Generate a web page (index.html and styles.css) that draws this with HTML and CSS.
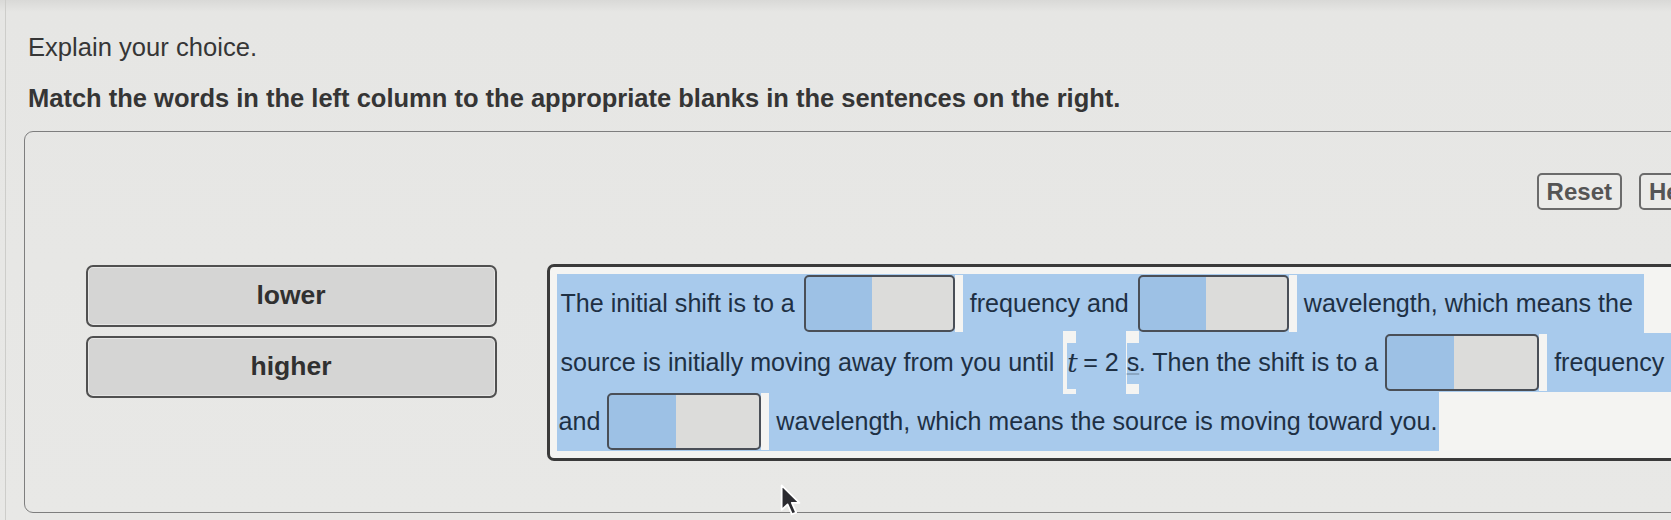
FILE: index.html
```html
<!DOCTYPE html>
<html lang="en">
<head>
<meta charset="utf-8">
<title>Match the words</title>
<link rel="stylesheet" href="styles.css">
</head>
<body>
<div class="page">
  <p class="prompt">Explain your choice.</p>
  <p class="instr">Match the words in the left column to the appropriate blanks in the sentences on the right.</p>
  <div class="panel">
    <div class="toolbar">
      <button class="btn">Reset</button>
      <button class="btn">Help</button>
    </div>
    <div class="work">
      <div class="bank">
        <div class="tile">lower</div>
        <div class="tile">higher</div>
      </div>
      <div class="sentences">
        <div class="line">
          <span class="seg lead pr">The initial shift is to a </span>
          <span class="blank"></span><span class="gap"></span>
          <span class="seg pr"> frequency and </span>
          <span class="blank"></span><span class="gap"></span>
          <span class="seg end1"> wavelength, which means the </span>
        </div>
        <div class="line">
          <span class="seg lead">source is initially moving away from you until </span>
          <span class="mbox tbox"><span class="mi">t</span></span>
          <span class="seg"> = 2 </span>
          <span class="mbox sbox"><span class="mn">s</span></span>
          <span class="seg">. Then the shift is to a </span>
          <span class="blank wide"></span><span class="gap"></span>
          <span class="seg end2"> frequency </span>
        </div>
        <div class="line">
          <span class="seg lead3">and </span>
          <span class="blank wide"></span><span class="gap"></span>
          <span class="seg end3"> wavelength, which means the source is moving toward you.</span>
        </div>
      </div>
    </div>
  </div>
  <svg class="cursor" width="24" height="34" viewBox="0 0 16 23" aria-hidden="true">
    <path d="M1 1 L1 17.5 L5 13.8 L8 20.5 L10.8 19.3 L7.9 12.8 L13 12.8 Z" fill="#2b2b30" stroke="#ffffff" stroke-width="1.2" stroke-linejoin="round"/>
  </svg>
</div>
</body>
</html>
```

FILE: styles.css
```css
html, body {
  margin: 0;
  padding: 0;
}
body {
  width: 1671px;
  height: 520px;
  overflow: hidden;
  background: linear-gradient(#d9d9d7 0, #e6e6e4 12px, #e8e8e6 100%);
  font-family: "Liberation Sans", Arial, Helvetica, sans-serif;
}
.page {
  position: relative;
  margin-left: 5px;
  border-left: 1px solid #cdcdca;
  height: 520px;
  box-sizing: border-box;
  padding-top: 32px;
}
.prompt {
  margin: 0 0 0 22px;
  font-size: 25.6px;
  line-height: 30px;
  color: #363636;
}
.instr {
  margin: 21px 0 0 22px;
  font-size: 25.5px;
  line-height: 30px;
  font-weight: bold;
  color: #353535;
}
.panel {
  margin: 18px 0 0 18px;
  width: 1708px;
  height: 382px;
  box-sizing: border-box;
  border: 1.5px solid #7e7e7e;
  border-radius: 9px;
  padding: 40.5px 20px 0 60.5px;
}
.toolbar {
  display: flex;
  justify-content: flex-end;
  gap: 17px;
}
.btn {
  height: 37px;
  box-sizing: border-box;
  padding: 0 8px;
  border: 2px solid #6b6b6b;
  border-radius: 5px;
  background: #ebebe9;
  font-family: "Liberation Sans", Arial, sans-serif;
  font-weight: bold;
  font-size: 24px;
  line-height: 33px;
  color: #555555;
}
.work {
  display: flex;
  align-items: flex-start;
  gap: 50px;
  margin-top: 54px;
}
.bank {
  flex: none;
  width: 411px;
  display: flex;
  flex-direction: column;
  gap: 9px;
  margin-top: 1px;
}
.tile {
  height: 62px;
  box-sizing: border-box;
  border: 2.5px solid #505050;
  border-radius: 7px;
  background: #d5d5d4;
  box-shadow: inset 0 0 0 1px #e6e6e5;
  display: flex;
  align-items: center;
  justify-content: center;
  font-weight: bold;
  font-size: 26.5px;
  color: #303030;
}
.sentences {
  flex: none;
  border: 3px solid #3a3a3a;
  border-radius: 7px;
  background: #f4f4f2;
  padding: 7px;
  color: #1e3044;
  font-size: 25.1px;
}
.line {
  display: flex;
  width: max-content;
  height: 59px;
  align-items: center;
  background: #a8caec;
}
.seg {
  align-self: stretch;
  line-height: 59px;
  white-space: pre;
}
.lead { padding-left: 4px; }
.lead3 { padding-left: 2px; }
.pr { padding-right: 2px; }
.end1 { padding-right: 4px; }
.end2 { padding-right: 20px; }
.end3 { padding-right: 2px; }
.blank {
  flex: none;
  width: 151px;
  height: 57px;
  box-sizing: border-box;
  border: 2px solid #4a4f57;
  border-radius: 5px;
  background: linear-gradient(to right, #9dc1e5 0, #9dc1e5 45%, #dcdcda 45%, #dcdcda 100%);
}
.blank.wide {
  width: 154px;
}
.gap {
  flex: none;
  width: 8px;
  height: 57px;
  background: #f4f4f2;
}
.mbox {
  flex: none;
  display: flex;
  height: 63px;
  width: 13px;
  box-sizing: border-box;
  background: #f4f4f2;
}
.tbox {
  margin-left: 2px;
  padding: 12px 0 5px 4px;
}
.sbox {
  padding: 12px 1px 10px 1px;
}
.mi {
  flex: 1;
  display: block;
  background: #a8caec;
  font-family: "DejaVu Serif", "Liberation Serif", serif;
  font-style: italic;
  font-size: 26px;
  line-height: 40.5px;
}
.mn {
  flex: 1;
  display: block;
  background: #a8caec;
  font-size: 25px;
  line-height: 39.3px;
  text-decoration: underline;
  text-decoration-color: #8aa6c2;
}
.cursor {
  position: absolute;
  left: 773.5px;
  top: 483.5px;
}
```
